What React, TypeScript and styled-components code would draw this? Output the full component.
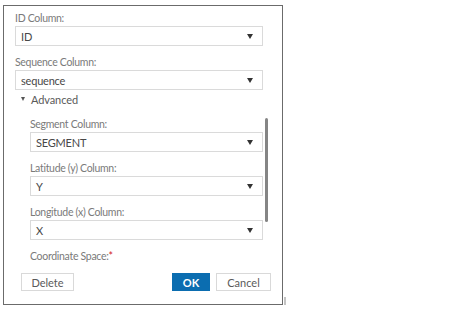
import React from "react";
import styled, { createGlobalStyle } from "styled-components";

const Global = createGlobalStyle`
  html, body { margin: 0; padding: 0; background: #ffffff; }
  body { font-family: "Lato", "Open Sans", sans-serif; }
`;

const Page = styled.div`
  width: 474px;
  height: 310px;
  padding: 5px 0 0 3px;
  box-sizing: border-box;
`;

const Dialog = styled.div`
  position: relative;
  width: 280px;
  height: 300px;
  box-sizing: border-box;
  border: 1px solid #6b6b6b;
  background: #fff;
  display: flex;
  flex-direction: column;
`;

const ShadowNub = styled.div`
  position: absolute;
  right: -4px;
  bottom: -1px;
  width: 2px;
  height: 8px;
  background: #c4c4c4;
`;

const Body = styled.div`
  display: flex;
  flex-direction: row;
  padding: 4px 13px 0 11px;
  height: 262px;
  overflow: hidden;
  box-sizing: border-box;
`;

const Form = styled.div`
  width: 248px;
  display: flex;
  flex-direction: column;
`;

const ScrollTrack = styled.div`
  width: 4px;
  margin-left: 2px;
`;

const ScrollThumb = styled.div`
  margin-top: 108px;
  width: 3px;
  height: 104px;
  border-radius: 2px;
  background: #858585;
`;

const Field = styled.div<{ $first?: boolean }>`
  display: flex;
  flex-direction: column;
  margin-top: ${(p) => (p.$first ? "0" : "8px")};
`;

const Label = styled.div`
  height: 16px;
  line-height: 16px;
  font-size: 10.5px;
  letter-spacing: -0.3px;
  color: #7a7a7a;
  white-space: nowrap;
`;

const Required = styled.span`
  color: #d2232a;
`;

const Select = styled.div`
  height: 20px;
  box-sizing: border-box;
  border: 1px solid #dadada;
  display: flex;
  align-items: center;
  justify-content: space-between;
  padding: 0 9px 0 5px;
  font-size: 11px;
  letter-spacing: -0.2px;
  color: #484848;
`;

const Caret = styled.span`
  width: 0;
  height: 0;
  border-left: 3px solid transparent;
  border-right: 3px solid transparent;
  border-top: 5px solid #333;
`;

const AdvancedRow = styled.div`
  display: flex;
  align-items: center;
  height: 16px;
  margin-top: 1px;
  padding-left: 6px;
  font-size: 11px;
  letter-spacing: -0.1px;
  color: #5a5a5a;
`;

const SmallCaret = styled.span`
  width: 0;
  height: 0;
  border-left: 2.5px solid transparent;
  border-right: 2.5px solid transparent;
  border-top: 4px solid #555;
  margin-right: 6px;
`;

const Indented = styled.div`
  display: flex;
  flex-direction: column;
  padding-left: 15px;
  margin-top: 1px;
`;

const Footer = styled.div`
  display: flex;
  align-items: center;
  padding: 5px 11px 0 17px;
`;

const Button = styled.button<{ $primary?: boolean }>`
  height: 18px;
  box-sizing: border-box;
  padding: 0;
  font-family: "Lato", "Open Sans", sans-serif;
  font-size: 11px;
  border: 1px solid ${(p) => (p.$primary ? "#0b6db0" : "#d9d9d9")};
  background: ${(p) => (p.$primary ? "#0b6db0" : "#fff")};
  color: ${(p) => (p.$primary ? "#fff" : "#5a5a5a")};
  font-weight: ${(p) => (p.$primary ? 700 : 400)};
`;

const Spacer = styled.div`
  flex: 1;
`;

const FieldBlock = ({ label, value, first }: { label: React.ReactNode; value: string; first?: boolean }) => (
  <Field $first={first}>
    <Label>{label}</Label>
    <Select>
      <span>{value}</span>
      <Caret />
    </Select>
  </Field>
);

export default function App() {
  return (
    <Page>
      <Global />
      <Dialog>
        <Body>
          <Form>
            <FieldBlock first label="ID Column:" value="ID" />
            <FieldBlock label="Sequence Column:" value="sequence" />
            <AdvancedRow>
              <SmallCaret />
              Advanced
            </AdvancedRow>
            <Indented>
              <FieldBlock label="Segment Column:" value="SEGMENT" />
              <FieldBlock label="Latitude (y) Column:" value="Y" />
              <FieldBlock label="Longitude (x) Column:" value="X" />
              <Field>
                <Label>
                  Coordinate Space:<Required>*</Required>
                </Label>
              </Field>
            </Indented>
          </Form>
          <ScrollTrack>
            <ScrollThumb />
          </ScrollTrack>
        </Body>
        <Footer>
          <Button style={{ width: 53 }}>Delete</Button>
          <Spacer />
          <Button $primary style={{ width: 38 }}>OK</Button>
          <Button style={{ width: 55, marginLeft: 6 }}>Cancel</Button>
        </Footer>
        <ShadowNub />
      </Dialog>
    </Page>
  );
}
